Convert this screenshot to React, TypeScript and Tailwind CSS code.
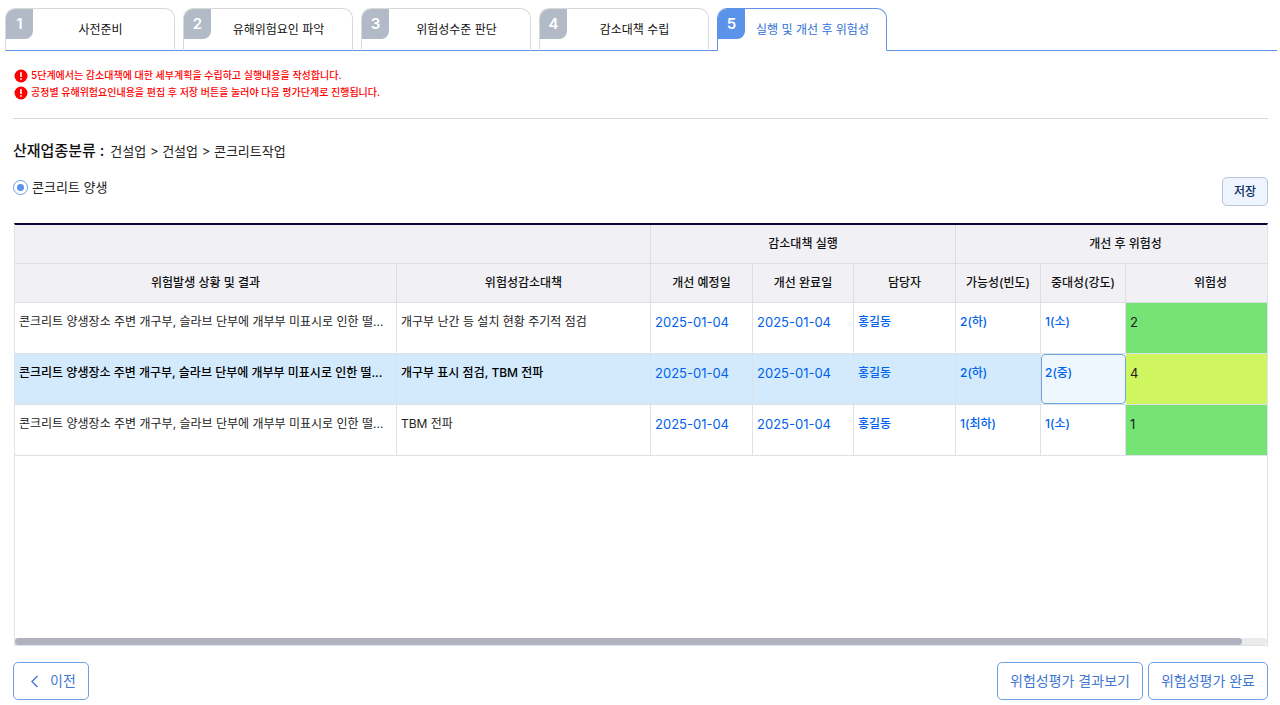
import { useState } from "react";

const steps = ["사전준비", "유해위험요인 파악", "위험성수준 판단", "감소대책 수립", "실행 및 개선 후 위험성"];

const notices = [
  "5단계에서는 감소대책에 대한 세부계획을 수립하고 실행내용을 작성합니다.",
  "공정별 유해위험요인내용을 편집 후 저장 버튼을 눌러야 다음 평가단계로 진행됩니다.",
];

type Row = {
  situation: string;
  measure: string;
  planned: string;
  done: string;
  owner: string;
  likelihood: string;
  severity: string;
  risk: number;
};

const situation = "콘크리트 양생장소 주변 개구부, 슬라브 단부에 개부부 미표시로 인한 떨...";

const rows: Row[] = [
  { situation, measure: "개구부 난간 등 설치 현황 주기적 점검", planned: "2025-01-04", done: "2025-01-04", owner: "홍길동", likelihood: "2(하)", severity: "1(소)", risk: 2 },
  { situation, measure: "개구부 표시 점검, TBM 전파", planned: "2025-01-04", done: "2025-01-04", owner: "홍길동", likelihood: "2(하)", severity: "2(중)", risk: 4 },
  { situation, measure: "TBM 전파", planned: "2025-01-04", done: "2025-01-04", owner: "홍길동", likelihood: "1(최하)", severity: "1(소)", risk: 1 },
];

const headCell = "border-r border-b border-[#dddee2] bg-[#f0f0f5] p-0 text-center font-medium text-[#111]";
const bodyCell = "truncate border-r border-b border-[#dde2e8] px-1 pt-[9px] align-top leading-5";
const linkCell = `${bodyCell} font-medium text-[#0062ec]`;
const dateCell = `${bodyCell} text-[13px] text-[#0062ec]`;
const footerButton = "flex h-[38px] items-center rounded-[5px] border border-[#6f9fe6] bg-white text-sm text-[#3f78d2]";

function StepTabs({ active }: { active: number }) {
  return (
    <nav className="flex pr-[3px] pl-[5px] pt-2" aria-label="평가 단계">
      {steps.map((label, i) => {
        const on = i === active;
        return (
          <div key={label} className="flex">
            <a
              href={`#step-${i + 1}`}
              aria-current={on ? "step" : undefined}
              className={`flex h-[43px] w-[170px] rounded-t-[10px] border ${
                on
                  ? "border-[#5f93e4] border-b-white text-[#2f6fd6]"
                  : "border-[#d9d9d9] border-b-[#5f93e4] text-[#111]"
              }`}
            >
              <span
                className={`flex h-[30px] w-[27px] shrink-0 items-center justify-center rounded-tl-[9px] rounded-br-[8px] text-[15px] font-semibold text-white ${
                  on ? "bg-[#5b93ea]" : "bg-[#b2bac8]"
                }`}
              >
                {i + 1}
              </span>
              <span className="flex grow items-center justify-center pr-1.5 text-xs">{label}</span>
            </a>
            {i < steps.length - 1 && <span className="w-2 border-b border-[#5f93e4]" />}
          </div>
        );
      })}
      <span className="grow border-b border-[#5f93e4]" />
    </nav>
  );
}

function AlertIcon() {
  return (
    <svg viewBox="0 0 14 14" className="size-[14px] shrink-0" aria-hidden="true">
      <circle cx="7" cy="7" r="6.5" fill="#ff0000" />
      <path d="M7 3.8v3.4" stroke="#fff" strokeWidth="1.7" strokeLinecap="round" />
      <circle cx="7" cy="9.9" r="0.9" fill="#fff" />
    </svg>
  );
}

export default function App() {
  const [selected, setSelected] = useState(1);

  return (
    <div className="bg-white font-['Inter','Noto_Sans_CJK_KR',sans-serif] text-xs text-[#222]">
      <StepTabs active={4} />

      <main className="pr-3 pl-[13px] pb-1">
        <ul className="border-b border-[#d8d8d8] pt-4 pb-[17px]">
          {notices.map((n) => (
            <li key={n} className="flex h-[17px] items-center gap-[3px] pl-px text-[10px] font-medium text-[#ff0000]">
              <AlertIcon />
              {n}
            </li>
          ))}
        </ul>

        <div className="flex items-center gap-1.5 pt-[22px] leading-5">
          <h1 className="text-[15px] font-medium text-[#111]">산재업종분류 :</h1>
          <p className="text-[13px]">건설업 &gt; 건설업 &gt; 콘크리트작업</p>
        </div>

        <div className="flex items-end justify-between pt-4">
          <label className="flex items-center gap-1 self-start text-[13px] leading-5">
            <input
              type="radio"
              name="process"
              defaultChecked
              className="grid size-[15px] appearance-none place-content-center rounded-full border border-[#6b9ce8] bg-white before:size-[7px] before:rounded-full checked:before:bg-[#5b93ea]"
            />
            콘크리트 양생
          </label>
          <button
            type="button"
            className="h-[29px] rounded-[5px] border border-[#b6c3d9] bg-[#edf4fe] px-[11px] text-xs font-medium text-[#0d2c60]"
          >
            저장
          </button>
        </div>

        <section className="mt-[17px] ml-px flex min-h-[423px] flex-col justify-between overflow-hidden border-x border-t-2 border-b border-[#dfe3ea] border-t-[#0b0638]">
          <table className="w-full min-w-[1281px] table-fixed border-separate border-spacing-0">
            <colgroup>
              <col className="w-[382px]" />
              <col className="w-[254px]" />
              <col className="w-[102px]" />
              <col className="w-[101px]" />
              <col className="w-[102px]" />
              <col className="w-[85px]" />
              <col className="w-[85px]" />
              <col />
            </colgroup>
            <thead>
              <tr className="h-[39px]">
                <td colSpan={2} className={headCell} />
                <th colSpan={3} scope="colgroup" className={headCell}>감소대책 실행</th>
                <th colSpan={3} scope="colgroup" className={headCell}>개선 후 위험성</th>
              </tr>
              <tr className="h-[39px]">
                <th scope="col" className={headCell}>위험발생 상황 및 결과</th>
                <th scope="col" className={headCell}>위험성감소대책</th>
                <th scope="col" className={headCell}>개선 예정일</th>
                <th scope="col" className={headCell}>개선 완료일</th>
                <th scope="col" className={headCell}>담당자</th>
                <th scope="col" className={headCell}>가능성(빈도)</th>
                <th scope="col" className={headCell}>중대성(강도)</th>
                <th scope="col" className={headCell}>위험성</th>
              </tr>
            </thead>
            <tbody>
              {rows.map((r, i) => {
                const on = i === selected;
                return (
                  <tr
                    key={i}
                    onClick={() => setSelected(i)}
                    className={`h-[51px] ${on ? "bg-[#d3eafd]" : "bg-white"}`}
                  >
                    <td className={`${bodyCell} ${on ? "font-medium text-black" : ""}`}>{r.situation}</td>
                    <td className={`${bodyCell} ${on ? "font-medium text-black" : ""}`}>{r.measure}</td>
                    <td className={dateCell}>{r.planned}</td>
                    <td className={dateCell}>{r.done}</td>
                    <td className={linkCell}>{r.owner}</td>
                    <td className={linkCell}>{r.likelihood}</td>
                    {on ? (
                      <td className="border-b border-[#dde2e8] bg-white p-0 align-top font-medium leading-5 text-[#0062ec]">
                        <div className="h-[50px] rounded-[4px] border border-[#6ea6e0] bg-[#eff7fe] px-[3px] pt-2">
                          {r.severity}
                        </div>
                      </td>
                    ) : (
                      <td className={linkCell}>{r.severity}</td>
                    )}
                    <td className={`${bodyCell} text-[13px] ${r.risk > 3 ? "bg-[#cff65f]" : "bg-[#75e475]"}`}>{r.risk}</td>
                  </tr>
                );
              })}
            </tbody>
          </table>
          <div className="h-[7px] rounded-r-full bg-[#ebebeb]" aria-hidden="true">
            <div className="h-full w-[98%] rounded-full bg-[#b0b3bd]" />
          </div>
        </section>

        <footer className="mt-4 flex items-center justify-between">
          <button type="button" className={`${footerButton} gap-2 px-3`}>
            <svg viewBox="0 0 16 16" className="size-4" fill="none" aria-hidden="true">
              <path d="M11.5 3 6 8.5l5.500 5.500" stroke="currentColor" strokeWidth="1.4" />
            </svg>
            이전
          </button>
          <div className="flex gap-[5px]">
            <button type="button" className={`${footerButton} px-3`}>위험성평가 결과보기</button>
            <button type="button" className={`${footerButton} px-3`}>위험성평가 완료</button>
          </div>
        </footer>
      </main>
    </div>
  );
}
